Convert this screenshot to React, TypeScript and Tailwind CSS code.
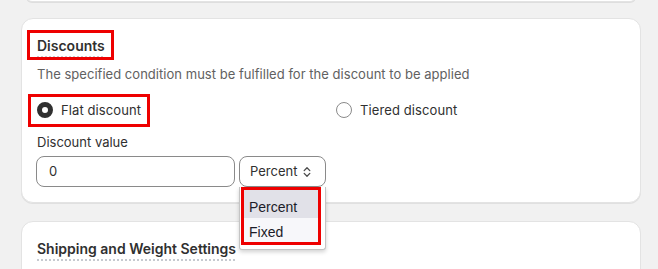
import React from 'react';

const Annotation = ({ className }: { className: string }) => (
  <span className={`pointer-events-none absolute border-[3px] border-[#ee0000] ${className}`} />
);

const SelectChevron = () => (
  <svg viewBox="0 0 8 12" className="h-[12px] w-[8px]" fill="none" aria-hidden="true">
    <path d="M1.2 4.6 4 1.8l2.8 2.8" stroke="#4a4a4a" strokeWidth="1.3" strokeLinecap="round" strokeLinejoin="round" />
    <path d="M1.2 7.4 4 10.2l2.8-2.8" stroke="#4a4a4a" strokeWidth="1.3" strokeLinecap="round" strokeLinejoin="round" />
  </svg>
);

const CardHeading = ({ children, marked }: { children: React.ReactNode; marked?: boolean }) => (
  <div className="relative w-fit">
    <h2 className="text-[14px] font-semibold leading-[20px] text-[#303030] underline decoration-dotted decoration-[#c6cad0] decoration-2 underline-offset-[5px]">
      {children}
    </h2>
    {marked && <Annotation className="-left-[10px] -right-[9px] -top-[6px] -bottom-[4px]" />}
  </div>
);

export default function App() {
  return (
    <div className="h-[269px] w-[658px] overflow-hidden bg-[#f1f1f1] font-['Inter',sans-serif] text-[#303030]">
      {/* previous card, scrolled out of view */}
      <div className="-mt-[10px] ml-[26px] h-[12px] w-[610px] rounded-xl border border-[#e3e3e3] bg-white shadow-[0_1px_0_rgba(0,0,0,0.08)]" />

      <section className="relative ml-[21px] mt-[16px] w-[620px] rounded-xl border border-[#e3e3e3] bg-white px-[15px] pb-[15px] pt-[17px] shadow-[0_1px_0_rgba(0,0,0,0.07)]">
        <CardHeading marked>Discounts</CardHeading>
        <p className="mt-2 text-[13px] leading-[20px] tracking-[0.03px] text-[#616161]">
          The specified condition must be fulfilled for the discount to be applied
        </p>

        <div className="mt-4 grid grid-cols-2 gap-x-[10px]">
          <label className="relative flex w-fit items-center gap-2">
            <span className="h-4 w-4 rounded-full border-[5px] border-[#303030] bg-white" />
            <span className="text-[13px] leading-[20px] tracking-[0.1px]">Flat discount</span>
            <Annotation className="-left-[9px] -right-[9px] -top-[6px] -bottom-[7px]" />
          </label>
          <label className="flex w-fit items-center gap-2">
            <span className="h-4 w-4 rounded-full border border-[#8a8a8a] bg-white" />
            <span className="text-[13px] leading-[20px] tracking-[0.1px]">Tiered discount</span>
          </label>
        </div>

        <div className="mt-3 text-[13px] leading-[20px]">Discount value</div>
        <div className="mt-1 flex gap-[4px]">
          <div className="-ml-px flex h-[31px] w-[199px] items-center rounded-lg border border-[#8a8a8a] bg-white px-3 text-[13px]">
            0
          </div>
          <div className="relative">
            <div className="flex h-[31px] w-[87px] items-center justify-between rounded-lg border border-[#8a8a8a] bg-white pl-[10px] pr-[14px] text-[13px]">
              <span>Percent</span>
              <SelectChevron />
            </div>
            <div className="absolute left-0 top-full z-10 w-[87px] rounded-b-[3px] border border-t-0 border-[#c4c4c4] bg-white pb-[4px] pl-px shadow-[0_2px_4px_rgba(0,0,0,0.18)] font-['Liberation_Sans',Arial,sans-serif] text-[14px] leading-[16px] text-[#1c1c28]">
              <div className="w-[80px] border-[3px] border-[#ee0000]">
                <div className="h-[28px] bg-[#e1e1e8] pl-[5px] pt-[9px]">Percent</div>
                <div className="h-[24px] bg-[#f7f7fa] pl-[5px] pt-[6px]">Fixed</div>
              </div>
            </div>
          </div>
        </div>
      </section>

      <section className="ml-[21px] mt-[18px] h-[80px] w-[620px] rounded-xl border border-[#e3e3e3] bg-white px-[15px] pt-[17px] shadow-[0_1px_0_rgba(0,0,0,0.07)]">
        <CardHeading>Shipping and Weight Settings</CardHeading>
      </section>
    </div>
  );
}
